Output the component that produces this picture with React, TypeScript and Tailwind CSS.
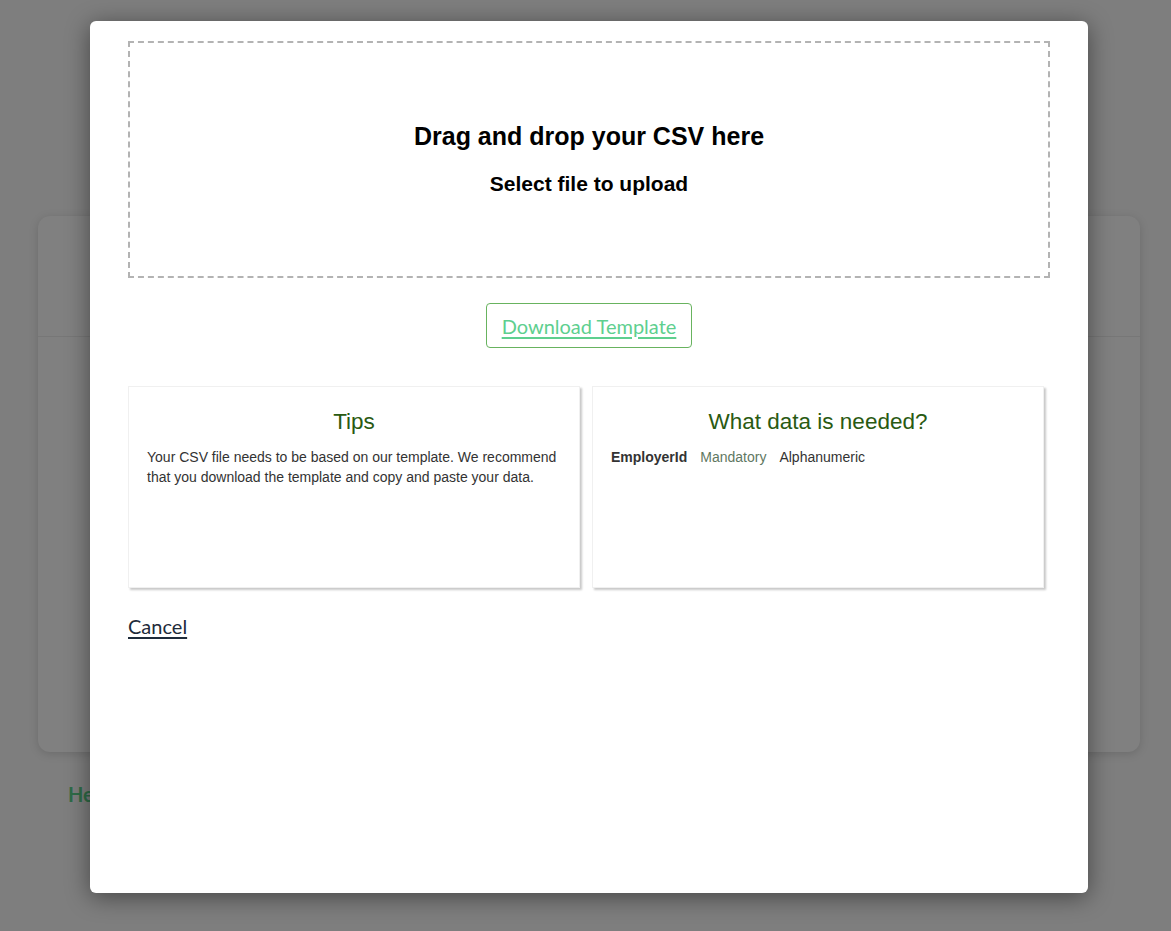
import React from 'react';

const sans = "font-['Liberation_Sans',Arial,sans-serif]";
const brand = "font-['Lato','Open_Sans',sans-serif]";

function InfoCard({ title, children }: { title: string; children: React.ReactNode }) {
  return (
    <div className="w-[452px] h-[202px] bg-white border border-[#f0f0f0] shadow-[2px_2px_2px_#c9c9c9] px-[18px] pt-[21px]">
      <h3 className={`${sans} text-[22.5px] leading-[28px] text-center text-[#2a5a12] mb-[11px]`}>{title}</h3>
      {children}
    </div>
  );
}

export default function App() {
  return (
    <div className="relative h-[931px] overflow-hidden bg-[#7e7e7e]">
      {/* page behind the overlay */}
      <div className="pt-[216px] pl-[38px]">
        <div className="w-[1102px] h-[536px] rounded-xl bg-[#808080] shadow-[0_2px_10px_rgba(0,0,0,0.15)]">
          <div className="h-[121px] border-b border-[#777777]" />
        </div>
        <div className={`${brand} mt-[27px] ml-[30px] text-[20px] font-bold text-[#2f6b47]`}>Help</div>
      </div>

      {/* modal */}
      <div className="absolute left-[90px] top-[21px] w-[998px] h-[872px] bg-white rounded-md shadow-[0_4px_24px_rgba(0,0,0,0.45)] px-[38px] pt-[20px]">
        <div className="w-[922px] h-[237px] border-2 border-dashed border-[#b3b3b3] flex flex-col items-center pt-[78px]">
          <h2 className={`${sans} text-[25px] leading-[30px] font-bold text-black`}>Drag and drop your CSV here</h2>
          <p className={`${sans} text-[21px] leading-[24px] font-bold text-black mt-[21px]`}>Select file to upload</p>
        </div>

        <div className="flex justify-center mt-[25px]">
          <button className={`${brand} w-[206px] h-[45px] rounded border border-[#68b35f] text-[20px] text-[#5ecf8f] underline underline-offset-[3px]`}>
            Download Template
          </button>
        </div>

        <div className="flex gap-[12px] mt-[38px]">
          <InfoCard title="Tips">
            <p className={`${sans} text-[14px] leading-[20px] text-[#333333]`}>
              Your CSV file needs to be based on our template. We recommend that you download the template and copy and paste your data.
            </p>
          </InfoCard>
          <InfoCard title="What data is needed?">
            <div className={`${sans} flex gap-[13px] text-[14px] leading-[20px]`}>
              <span className="font-bold text-[#333333]">EmployerId</span>
              <span className="text-[#5f7862]">Mandatory</span>
              <span className="text-[#333333]">Alphanumeric</span>
            </div>
          </InfoCard>
        </div>

        <div className="mt-[26px]">
          <a href="#" className={`${brand} text-[20px] leading-[24px] text-[#1e2b3a] underline underline-offset-[3px]`}>Cancel</a>
        </div>
      </div>
    </div>
  );
}
